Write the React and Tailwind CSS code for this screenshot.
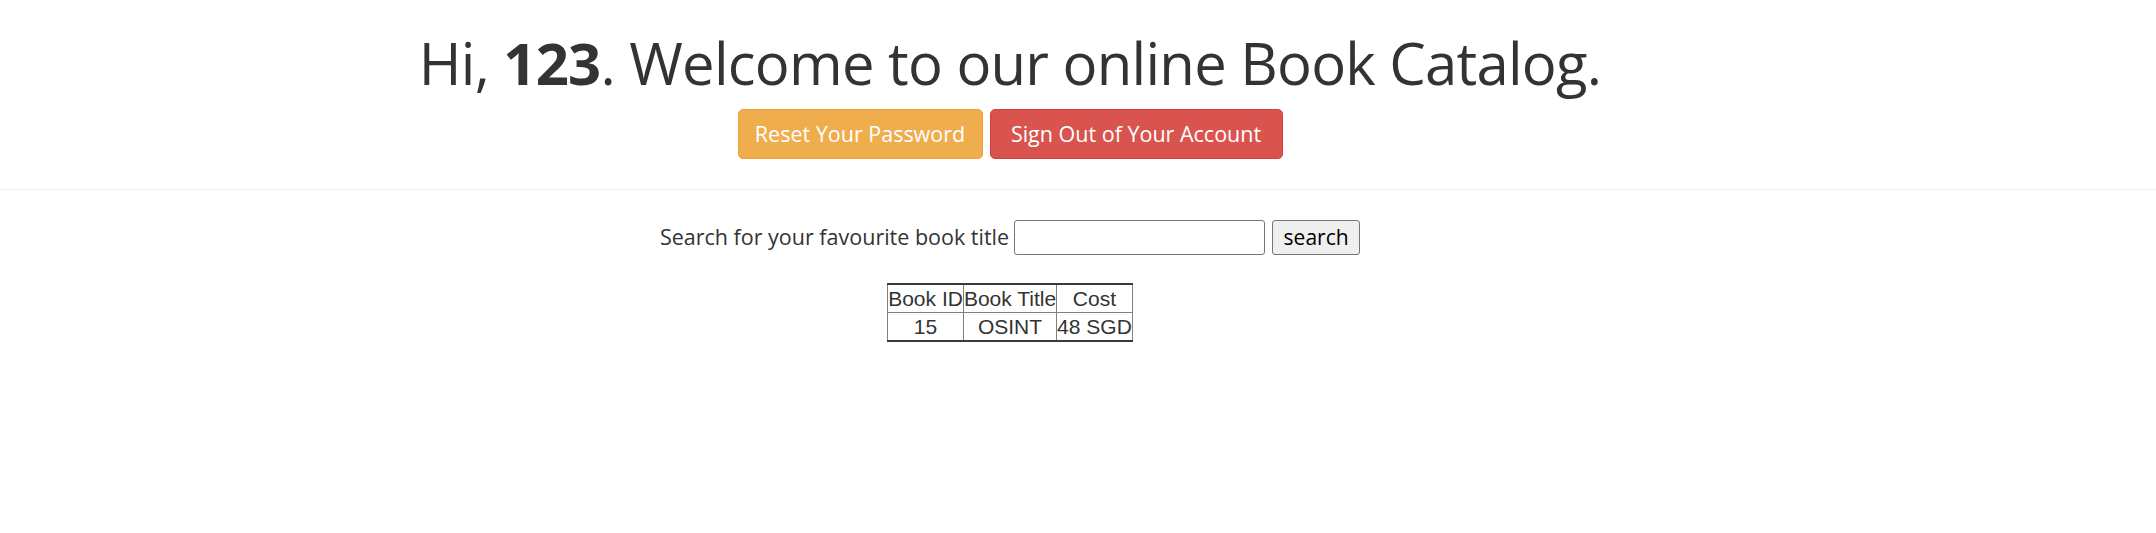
import React from "react";

const books = [{ id: 15, title: "OSINT", cost: "48 SGD" }];

export default function App() {
  return (
    <div className="w-[2156px] h-[533px] bg-white text-[#333] font-['Open_Sans',sans-serif]">
      <div className="w-[2020px] pt-[31px] flex flex-col items-center">
        <h1 className="text-[58px] leading-[64px] font-normal tracking-[-0.013em] whitespace-nowrap">
          Hi, <b className="font-bold">123</b>. Welcome to our online Book Catalog.
        </h1>
        <div className="mt-[14px] flex gap-[7px]">
          <button className="w-[245px] h-[50px] rounded-[5px] border border-[#eea236] bg-[#f0ad4e] text-white text-[21.5px]">
            Reset Your Password
          </button>
          <button className="w-[293px] h-[50px] rounded-[5px] border border-[#d43f3a] bg-[#d9534f] text-white text-[21.5px]">
            Sign Out of Your Account
          </button>
        </div>
      </div>
      <hr className="mt-[30px] border-0 border-t border-[#eeeeee]" />
      <div className="w-[2020px] flex flex-col items-center">
        <div className="mt-[30px] h-[35px] flex items-center">
          <span className="text-[21.5px]">Search for your favourite book title</span>
          <input
            type="text"
            className="ml-[5px] w-[251px] h-[35px] rounded-[3px] border border-[#767676] bg-white px-2"
          />
          <button className="ml-[7px] w-[88px] h-[35px] rounded-[3px] border border-[#767676] bg-[#efefef] text-[21px] text-black leading-none">
            search
          </button>
        </div>
        <table className="mt-[28px] border-collapse border-y-2 border-x border-y-[#3a3a3a] border-x-[#808080] font-['Liberation_Sans',Arial,sans-serif] text-[21px] text-[#333] leading-[25px] whitespace-nowrap">
          <thead>
            <tr>
              <td className="border border-[#808080] px-0 py-[1px] text-center">Book ID</td>
              <td className="border border-[#808080] px-0 py-[1px] text-center">Book Title</td>
              <td className="border border-[#808080] px-0 py-[1px] text-center">Cost</td>
            </tr>
          </thead>
          <tbody>
            {books.map((b) => (
              <tr key={b.id}>
                <td className="border border-[#808080] px-0 py-[1px] text-center">{b.id}</td>
                <td className="border border-[#808080] px-0 py-[1px] text-center">{b.title}</td>
                <td className="border border-[#808080] px-0 py-[1px] text-center">{b.cost}</td>
              </tr>
            ))}
          </tbody>
        </table>
      </div>
    </div>
  );
}
